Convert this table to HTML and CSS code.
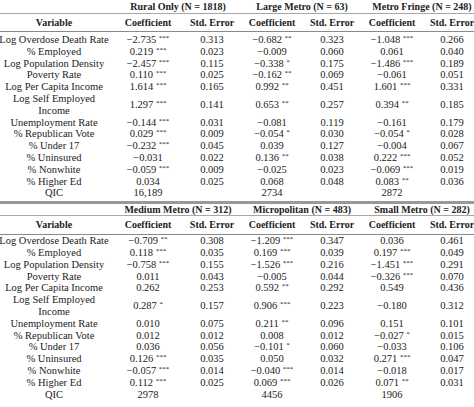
FILE: index.html
```html
<!DOCTYPE html>
<html lang="en">
<head>
    <meta charset="UTF-8">
    <meta name="viewport" content="width=device-width, initial-scale=1.0">
    <title>Regression results by county type</title>
    <link rel="stylesheet" href="styles.css">
</head>
<body>
    <div class="sheet">
        <!-- Панель 1: сельские и крупные метро -->
        <table class="results">
            <colgroup>
                <col class="c-var"><col class="c-coef1"><col class="c-num">
                <col class="c-num"><col class="c-num"><col class="c-num"><col class="c-num">
            </colgroup>
            <thead>
                <tr class="groups">
                    <th></th>
                    <th colspan="2">Rural Only (N = 1818)</th>
                    <th colspan="2">Large Metro (N = 63)</th>
                    <th colspan="2">Metro Fringe (N = 248)</th>
                </tr>
                <tr class="cols">
                    <th>Variable</th>
                    <th>Coefficient</th><th>Std. Error</th>
                    <th>Coefficient</th><th>Std. Error</th>
                    <th>Coefficient</th><th>Std. Error</th>
                </tr>
            </thead>
            <tbody>
                <tr><td>Log Overdose Death Rate</td><td>−2.735 <sup>***</sup></td><td>0.313</td><td>−0.682 <sup>**</sup></td><td>0.323</td><td>−1.048 <sup>***</sup></td><td>0.266</td></tr>
                <tr><td>% Employed</td><td>0.219 <sup>***</sup></td><td>0.023</td><td>−0.009</td><td>0.060</td><td>0.061</td><td>0.040</td></tr>
                <tr><td>Log Population Density</td><td>−2.457 <sup>***</sup></td><td>0.115</td><td>−0.338 <sup>*</sup></td><td>0.175</td><td>−1.486 <sup>***</sup></td><td>0.189</td></tr>
                <tr><td>Poverty Rate</td><td>0.110 <sup>***</sup></td><td>0.025</td><td>−0.162 <sup>**</sup></td><td>0.069</td><td>−0.061</td><td>0.051</td></tr>
                <tr><td>Log Per Capita Income</td><td>1.614 <sup>***</sup></td><td>0.165</td><td>0.992 <sup>**</sup></td><td>0.451</td><td>1.601 <sup>***</sup></td><td>0.331</td></tr>
                <tr><td>Log Self Employed<br>Income</td><td>1.297 <sup>***</sup></td><td>0.141</td><td>0.653 <sup>**</sup></td><td>0.257</td><td>0.394 <sup>**</sup></td><td>0.185</td></tr>
                <tr><td>Unemployment Rate</td><td>−0.144 <sup>***</sup></td><td>0.031</td><td>−0.081</td><td>0.119</td><td>−0.161</td><td>0.179</td></tr>
                <tr><td>% Republican Vote</td><td>0.029 <sup>***</sup></td><td>0.009</td><td>−0.054 <sup>*</sup></td><td>0.030</td><td>−0.054 <sup>*</sup></td><td>0.028</td></tr>
                <tr><td>% Under 17</td><td>−0.232 <sup>***</sup></td><td>0.045</td><td>0.039</td><td>0.127</td><td>−0.004</td><td>0.067</td></tr>
                <tr><td>% Uninsured</td><td>−0.031</td><td>0.022</td><td>0.136 <sup>**</sup></td><td>0.038</td><td>0.222 <sup>***</sup></td><td>0.052</td></tr>
                <tr><td>% Nonwhite</td><td>−0.059 <sup>***</sup></td><td>0.009</td><td>−0.025</td><td>0.023</td><td>−0.069 <sup>***</sup></td><td>0.019</td></tr>
                <tr><td>% Higher Ed</td><td>0.034</td><td>0.025</td><td>0.068</td><td>0.048</td><td>0.083 <sup>**</sup></td><td>0.036</td></tr>
                <tr><td>QIC</td><td>16,189</td><td></td><td>2734</td><td></td><td>2872</td><td></td></tr>
            </tbody>
        </table>

        <!-- Панель 2: средние метро и микрополитены -->
        <table class="results second">
            <colgroup>
                <col class="c-var"><col class="c-coef1"><col class="c-num">
                <col class="c-num"><col class="c-num"><col class="c-num"><col class="c-num">
            </colgroup>
            <thead>
                <tr class="groups">
                    <th></th>
                    <th colspan="2">Medium Metro (N = 312)</th>
                    <th colspan="2">Micropolitan (N = 483)</th>
                    <th colspan="2">Small Metro (N = 282)</th>
                </tr>
                <tr class="cols">
                    <th>Variable</th>
                    <th>Coefficient</th><th>Std. Error</th>
                    <th>Coefficient</th><th>Std. Error</th>
                    <th>Coefficient</th><th>Std. Error</th>
                </tr>
            </thead>
            <tbody>
                <tr><td>Log Overdose Death Rate</td><td>−0.709 <sup>**</sup></td><td>0.308</td><td>−1.209 <sup>***</sup></td><td>0.347</td><td>0.036</td><td>0.461</td></tr>
                <tr><td>% Employed</td><td>0.118 <sup>***</sup></td><td>0.035</td><td>0.169 <sup>***</sup></td><td>0.039</td><td>0.197 <sup>***</sup></td><td>0.049</td></tr>
                <tr><td>Log Population Density</td><td>−0.758 <sup>***</sup></td><td>0.155</td><td>−1.526 <sup>***</sup></td><td>0.216</td><td>−1.451 <sup>***</sup></td><td>0.291</td></tr>
                <tr><td>Poverty Rate</td><td>0.011</td><td>0.043</td><td>−0.005</td><td>0.044</td><td>−0.326 <sup>***</sup></td><td>0.070</td></tr>
                <tr><td>Log Per Capita Income</td><td>0.262</td><td>0.253</td><td>0.592 <sup>**</sup></td><td>0.292</td><td>0.549</td><td>0.436</td></tr>
                <tr><td>Log Self Employed<br>Income</td><td>0.287 <sup>*</sup></td><td>0.157</td><td>0.906 <sup>***</sup></td><td>0.223</td><td>−0.180</td><td>0.312</td></tr>
                <tr><td>Unemployment Rate</td><td>0.010</td><td>0.075</td><td>0.211 <sup>**</sup></td><td>0.096</td><td>0.151</td><td>0.101</td></tr>
                <tr><td>% Republican Vote</td><td>0.012</td><td>0.012</td><td>0.008</td><td>0.012</td><td>−0.027 <sup>*</sup></td><td>0.015</td></tr>
                <tr><td>% Under 17</td><td>0.036</td><td>0.056</td><td>−0.101 <sup>*</sup></td><td>0.060</td><td>−0.033</td><td>0.106</td></tr>
                <tr><td>% Uninsured</td><td>0.126 <sup>***</sup></td><td>0.035</td><td>0.050</td><td>0.032</td><td>0.271 <sup>***</sup></td><td>0.047</td></tr>
                <tr><td>% Nonwhite</td><td>−0.057 <sup>***</sup></td><td>0.014</td><td>−0.040 <sup>***</sup></td><td>0.014</td><td>−0.018</td><td>0.017</td></tr>
                <tr><td>% Higher Ed</td><td>0.112 <sup>***</sup></td><td>0.025</td><td>0.069 <sup>***</sup></td><td>0.026</td><td>0.071 <sup>**</sup></td><td>0.031</td></tr>
                <tr><td>QIC</td><td>2978</td><td></td><td>4456</td><td></td><td>1906</td><td></td></tr>
            </tbody>
        </table>
    </div>
</body>
</html>
```

FILE: styles.css
```css
/* Основные стили */
body {
    margin: 0;
    overflow: hidden;
    background: #fff;
    color: #222;
    font-family: 'Liberation Serif', 'Times New Roman', serif;
}

/* Таблица немного шире окна, края обрезаны */
.sheet {
    width: 488px;
    margin-left: -6px;
}

.results {
    width: 488px;
    border-collapse: collapse;
    table-layout: fixed;
}

.c-var { width: 120px; }
.c-coef1 { width: 68px; }
.c-num { width: 60px; }

.results th,
.results td {
    padding: 0;
    text-align: center;
    white-space: nowrap;
}

.results th {
    font-size: 10px;
    font-weight: bold;
}

.results td {
    font-size: 10.5px;
    line-height: 11.8px;
}

/* Заголовки групп */
.groups th {
    height: 13px;
    line-height: 13px;
    border-bottom: 1px solid #a8a8a8;
}

.cols th {
    height: 17px;
    line-height: 17px;
    border-bottom: 1px solid #8a8a8a;
}

.results tbody tr:first-child td {
    padding-top: 2px;
}

.results sup {
    font-size: 7px;
    line-height: 0;
    vertical-align: 3px;
}

/* Вторая панель */
.second {
    margin-top: 2px;
    border-top: 3px solid #999;
}

.second .groups th {
    height: 11px;
    line-height: 11px;
}

.second .cols th {
    height: 18px;
    line-height: 18px;
}

.second tbody tr:first-child td {
    padding-top: 0;
}
```
